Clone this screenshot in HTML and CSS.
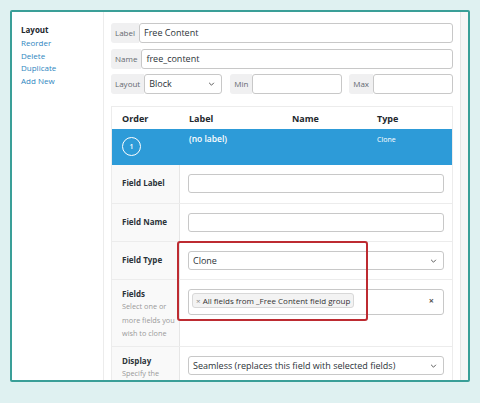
FILE: index.html
```html
<!DOCTYPE html>
<html>
<head>
<meta charset="utf-8">
<link rel="stylesheet" href="styles.css">
</head>
<body>
<div class="frame">
  <aside class="side">
    <div class="side-title">Layout</div>
    <a class="side-link">Reorder</a>
    <a class="side-link">Delete</a>
    <a class="side-link">Duplicate</a>
    <a class="side-link">Add New</a>
  </aside>
  <main class="main">
    <div class="row">
      <span class="prefix">Label</span><div class="input grow">Free Content</div>
    </div>
    <div class="row">
      <span class="prefix">Name</span><div class="input grow">free_content</div>
    </div>
    <div class="row row-layout">
      <div class="group">
        <span class="prefix">Layout</span><div class="input select sel-layout">Block<svg class="chev" viewBox="0 0 8 5"><path d="M1 1l3 3 3-3" fill="none" stroke="#555" stroke-width="1.2"/></svg></div>
      </div>
      <div class="group g-min">
        <span class="prefix">Min</span><div class="input grow"></div>
      </div>
      <div class="group g-max">
        <span class="prefix">Max</span><div class="input grow"></div>
      </div>
    </div>

    <div class="table">
      <div class="thead">
        <div class="c c-order">Order</div>
        <div class="c c-label">Label</div>
        <div class="c c-name">Name</div>
        <div class="c c-type">Type</div>
      </div>
      <div class="selrow">
        <div class="c c-order"><span class="circle">1</span></div>
        <div class="c c-label sel-label">(no label)</div>
        <div class="c c-name"></div>
        <div class="c c-type sel-type">Clone</div>
      </div>

      <div class="frow">
        <div class="flabel"><b>Field Label</b></div>
        <div class="fval"><div class="input full"></div></div>
      </div>
      <div class="frow">
        <div class="flabel"><b>Field Name</b></div>
        <div class="fval"><div class="input full"></div></div>
      </div>
      <div class="frow">
        <div class="flabel"><b>Field Type</b></div>
        <div class="fval"><div class="input full select">Clone<svg class="chev" viewBox="0 0 8 5"><path d="M1 1l3 3 3-3" fill="none" stroke="#555" stroke-width="1.2"/></svg></div></div>
      </div>
      <div class="frow frow-fields">
        <div class="flabel has-desc"><b>Fields</b><p class="desc">Select one or more fields you wish to clone</p></div>
        <div class="fval">
          <div class="input full multi">
            <span class="tag"><span class="tx">×</span> All fields from _Free Content field group</span>
            <span class="clear">×</span>
          </div>
        </div>
      </div>
      <div class="frow frow-last">
        <div class="flabel has-desc"><b>Display</b><p class="desc">Specify the</p></div>
        <div class="fval"><div class="input full select">Seamless (replaces this field with selected fields)<svg class="chev" viewBox="0 0 8 5"><path d="M1 1l3 3 3-3" fill="none" stroke="#555" stroke-width="1.2"/></svg></div></div>
      </div>
    </div>
  </main>
  <div class="scroll"></div>
  <div class="highlight"></div>
</div>
</body>
</html>
```

FILE: styles.css
```css
* { box-sizing: border-box; }
html, body { margin: 0; padding: 0; }
body {
  background: #dff1f1;
  font-family: "Open Sans", "Noto Sans", sans-serif;
  color: #32373c;
  padding: 10px 0 0 10px;
  width: 480px;
  height: 403px;
  overflow: hidden;
}
.frame {
  position: relative;
  width: 460px;
  height: 372px;
  border: 2px solid #3a9f98;
  border-radius: 2px;
  background: #fff;
  display: flex;
  overflow: hidden;
}
.side {
  width: 92px;
  flex: none;
  border-right: 1px solid #ececec;
  padding: 12px 0 0 9px;
  display: flex;
  flex-direction: column;
}
.side-title {
  font-size: 8px;
  font-weight: 700;
  color: #23282d;
  line-height: 12px;
  margin-bottom: 1px;
}
.side-link {
  font-size: 8px;
  color: #2f86c0;
  line-height: 12.7px;
}
.main {
  flex: 1;
  padding: 11px 7px 0 7px;
  min-width: 0;
}
.scroll {
  width: 8px;
  flex: none;
  border-left: 1px solid #e6e6e6;
  background: #f6f6f6;
}
.row {
  display: flex;
  height: 20px;
  margin-bottom: 5.5px;
}
.row-layout { margin-bottom: 12px; }
.group { display: flex; }
.g-min { margin-left: 8px; width: 112px; }
.g-max { margin-left: 7px; flex: 1; }
.prefix {
  background: #f0f0f1;
  color: #646970;
  font-size: 8px;
  line-height: 20px;
  padding: 0 4px;
  border-radius: 3px 0 0 3px;
  flex: none;
}
.input {
  border: 1px solid #c8c8c8;
  border-radius: 3px;
  background: #fff;
  font-size: 9px;
  line-height: 18px;
  padding: 0 4px;
  color: #2c3338;
  height: 20px;
  position: relative;
  white-space: nowrap;
}
.grow { flex: 1; }
.sel-layout { width: 78px; }
.select { padding-right: 16px; }
.chev {
  position: absolute;
  right: 6px;
  top: 7px;
  width: 7px;
  height: 4px;
}
.table {
  border: 1px solid #ececec;
  border-bottom: none;
}
.thead, .selrow { display: flex; }
.thead { height: 22px; align-items: center; }
.c { padding-left: 10px; }
.c-order { width: 67px; }
.c-label { width: 103px; }
.c-name { width: 85px; }
.c-type { flex: 1; }
.thead .c {
  font-size: 9px;
  font-weight: 700;
  color: #23282d;
}
.selrow {
  background: #2d9bd8;
  height: 36px;
  color: #fff;
}
.selrow .c-order { padding-top: 8px; }
.circle {
  display: block;
  width: 19px;
  height: 19px;
  border: 1px solid #fff;
  border-radius: 50%;
  font-size: 7px;
  line-height: 17px;
  text-align: center;
  font-weight: 600;
}
.sel-label {
  font-size: 8.5px;
  font-weight: 600;
  padding-top: 4px;
}
.sel-type {
  font-size: 7px;
  padding-top: 6px;
}
.frow {
  display: flex;
  border-top: 1px solid #ececec;
  height: 38px;
}
.frow:nth-of-type(3) { border-top: none; }
.flabel {
  width: 68px;
  flex: none;
  background: #f9f9f9;
  border-right: 1px solid #e6e6e6;
  padding: 10px 4px 8px 10px;
}
.flabel b {
  display: block;
  font-size: 8px;
  font-weight: 700;
  color: #2c3338;
  line-height: 16px;
}
.flabel.has-desc { padding-top: 8px; }
.flabel.has-desc b { line-height: 12px; }
.desc {
  margin: 0;
  font-size: 7.3px;
  line-height: 13.5px;
  color: #9a9a9a;
}
.fval {
  flex: 1;
  padding: 9px 8px 0 8px;
}
.full { width: 100%; height: 19px; line-height: 17px; }
.frow-fields { height: 67px; }
.frow-last { height: 60px; }
.multi {
  height: 26px;
  padding: 3px 3px;
  display: flex;
  align-items: flex-start;
}
.tag {
  display: inline-block;
  background: #f3f3f3;
  border: 1px solid #d8d8d8;
  border-radius: 3px;
  font-size: 8px;
  line-height: 13px;
  padding: 0 3px;
  color: #333;
}
.tx { color: #888; }
.clear {
  margin-left: auto;
  margin-right: 6px;
  font-size: 9px;
  line-height: 16px;
  color: #555;
  font-weight: 700;
}
.highlight {
  position: absolute;
  left: 165px;
  top: 229px;
  width: 191px;
  height: 80px;
  border: 2px solid #bd2b31;
  border-radius: 3px;
}
```
